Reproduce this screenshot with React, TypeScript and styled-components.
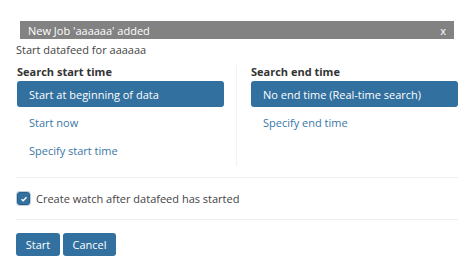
import React from "react";
import styled, { createGlobalStyle } from "styled-components";

const GlobalStyle = createGlobalStyle`
  body {
    margin: 0;
    background: #fff;
    font-family: "Open Sans", "Liberation Sans", sans-serif;
    color: #444;
  }
`;

const Dialog = styled.div`
  width: 474px;
  height: 270px;
  box-sizing: border-box;
  padding: 21px 16px 0 16px;
  display: flex;
  flex-direction: column;
`;

const Toast = styled.div`
  margin: 0 4px;
  height: 18px;
  background: #828282;
  color: #fff;
  font-size: 11px;
  display: flex;
  align-items: center;
  justify-content: space-between;
  padding: 0 8px;
`;

const Intro = styled.div`
  font-size: 11px;
  line-height: 16px;
  margin-top: 3px;
`;

const Columns = styled.div`
  display: grid;
  grid-template-columns: 1fr 1fr;
  column-gap: 26px;
  margin-top: 7px;
  padding-bottom: 14px;
  border-bottom: 1px solid #eee;
`;

const Column = styled.div<{ divided?: boolean }>`
  display: flex;
  flex-direction: column;
  position: relative;
  ${(p) =>
    p.divided &&
    `&::after { content: ""; position: absolute; right: -13px; top: 0; bottom: -3px; width: 1px; background: #f2f2f2; }`}
`;

const Heading = styled.div`
  font-size: 11px;
  font-weight: 700;
  color: #333;
  line-height: 14px;
  padding-left: 1px;
`;

const Options = styled.div`
  display: flex;
  flex-direction: column;
  margin-top: 2px;
  gap: 2px;
`;

const Option = styled.div<{ active?: boolean }>`
  height: 26px;
  display: flex;
  align-items: center;
  padding-left: 12px;
  font-size: 11px;
  border-radius: 3px;
  background: ${(p) => (p.active ? "#31709f" : "transparent")};
  color: ${(p) => (p.active ? "#fff" : "#3a77a6")};
  margin-left: 1px;
`;

const CheckRow = styled.label`
  display: flex;
  align-items: center;
  gap: 6px;
  height: 41px;
  font-size: 11px;
  color: #444;
  border-bottom: 1px solid #eee;
`;

const Box = styled.span`
  width: 11px;
  height: 11px;
  border-radius: 3px;
  background: #31709f;
  border: 1px solid #2a5f88;
  box-shadow: 0 0 0 1px #b9cfe0;
  display: flex;
  align-items: center;
  justify-content: center;
  margin-left: 1px;
`;

const Footer = styled.div`
  display: flex;
  gap: 3px;
  margin-top: 13px;
`;

const Button = styled.button<{ wide?: boolean }>`
  height: 23px;
  width: ${(p) => (p.wide ? "53px" : "44px")};
  padding: 0;
  border: none;
  border-radius: 3px;
  background: #31709f;
  color: #fff;
  font-family: inherit;
  font-size: 11px;
`;

export default function App() {
  return (
    <>
      <GlobalStyle />
      <Dialog>
        <Toast>
          <span>New Job 'aaaaaa' added</span>
          <span>x</span>
        </Toast>
        <Intro>Start datafeed for aaaaaa</Intro>
        <Columns>
          <Column divided>
            <Heading>Search start time</Heading>
            <Options>
              <Option active>Start at beginning of data</Option>
              <Option>Start now</Option>
              <Option>Specify start time</Option>
            </Options>
          </Column>
          <Column>
            <Heading>Search end time</Heading>
            <Options>
              <Option active>No end time (Real-time search)</Option>
              <Option>Specify end time</Option>
            </Options>
          </Column>
        </Columns>
        <CheckRow>
          <Box>
            <svg width="8" height="8" viewBox="0 0 8 8">
              <path d="M1.5 4.2 L3.2 5.8 L6.5 2.3" stroke="#fff" strokeWidth="1.4" fill="none" />
            </svg>
          </Box>
          Create watch after datafeed has started
        </CheckRow>
        <Footer>
          <Button>Start</Button>
          <Button wide>Cancel</Button>
        </Footer>
      </Dialog>
    </>
  );
}
